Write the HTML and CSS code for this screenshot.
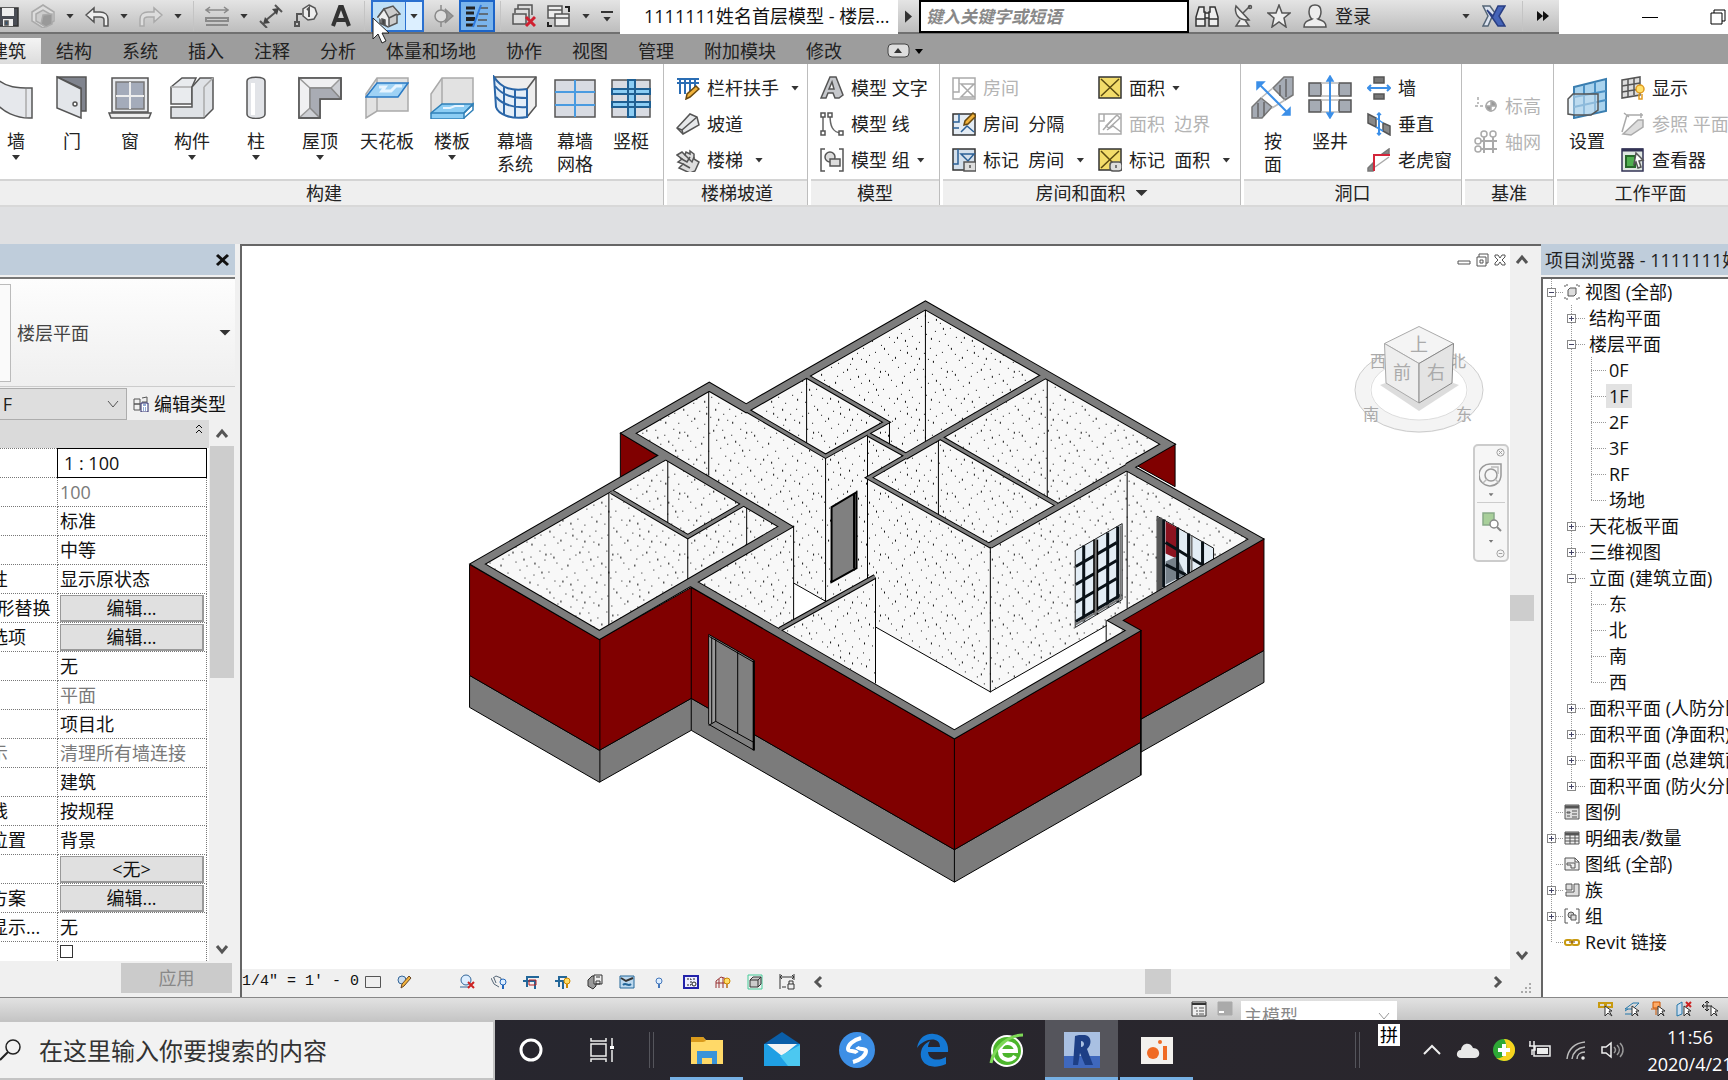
FILE: index.html
```html
<!DOCTYPE html>
<html lang="zh-CN">

<head>
    <meta charset="UTF-8">
    <title>1111111姓名首层模型</title>
    <link rel="stylesheet" href="styles.css">
</head>

<body>
    <header class="titlebar">
        <div class="qat">
            <button class="qat-btn qat-save" aria-label="保存"><svg class="ic" viewBox="0 0 24 24"><path d="M2 4h20v18H2z" fill="#4a4d55" stroke="#333"/><path d="M6 4h12v8H6zM7 15h10v7H7z" fill="#eee" stroke="none"/><path d="M9 17h3v4H9z" fill="#357"/></svg></button>
            <button class="qat-btn" aria-label="同步"><svg class="ic dim" viewBox="0 0 24 24"><path d="M1 8l11-7 11 7v9l-11 7-11-7z" fill="#ddd"/><path d="M5 10l7-4 7 4v7l-7 4-7-4z" fill="#ccc"/><path d="M12 11l9-1v10l-6 3-5-3z" fill="#999"/></svg></button>
            <span class="caret"></span>
            <button class="qat-btn" aria-label="放弃"><svg class="ic" viewBox="0 0 24 24"><path d="M1 11l8-7v4h6c5 0 8 3 8 7v7h-4v-6c0-2-2-3-4-3H9v5z" fill="#eee"/></svg></button>
            <span class="caret"></span>
            <button class="qat-btn" aria-label="重做"><svg class="ic dim" viewBox="0 0 24 24"><path d="M23 11l-8-7v4H9c-5 0-8 3-8 7v7h4v-6c0-2 2-3 4-3h6v5z" fill="#ddd"/></svg></button>
            <span class="caret"></span>
            <i class="sep"></i>
            <button class="qat-btn" aria-label="测量"><svg class="ic mid" viewBox="0 0 24 24"><path d="M1 6h22M5 3L1 6l4 3M19 3l4 3-4 3" stroke-width="1.500"/><path d="M1 14h22v3H1zM1 21h22" stroke-width="2"/></svg></button>
            <span class="caret"></span>
            <button class="qat-btn" aria-label="对齐尺寸标注"><svg class="ic" viewBox="0 0 24 24"><path d="M6 17L18 7M1 17l7 7M16 1l7 7" stroke-width="2"/><path d="M4 20l2-7 5 6zM20 4l-7 1 5 6z" fill="#444" stroke="none"/></svg></button>
            <button class="qat-btn" aria-label="按类别标记"><svg class="ic" viewBox="0 0 24 24"><path d="M15 1l6 3 2 6-3 5-6 1-5-4V5z" fill="#eee"/><path d="M13 6l2-2v9M8 10H3v8M1 18h4v4H1z" stroke-width="2"/></svg></button>
            <button class="qat-btn" aria-label="文字"><svg class="ic" viewBox="0 0 24 24"><path d="M4 22L11 3h2l7 19M7 16h10" stroke="#333" stroke-width="4"/></svg></button>
            <i class="sep"></i>
            <span class="split">
                <button class="split-main" aria-label="默认三维视图"><svg class="ic" viewBox="0 0 24 24"><path d="M1 13l6-8 9-3 7 8-3 1v8l-9 4-8-4v-6z" fill="#ccc"/><path d="M1 13l6-8 5 9v9M12 14l8-4" fill="#eee"/><path d="M5 15l3 1v5l-3-1z" fill="#444"/></svg></button>
                <button class="split-more" aria-label="更多视图"><span class="caret"></span></button>
            </span>
            <button class="qat-btn" aria-label="剖面"><svg class="ic mid" viewBox="0 0 24 24"><circle cx="11" cy="12" r="6" fill="#ddd"/><path d="M15 5l8 7-8 7c3-5 3-9 0-14z" fill="#999"/><path d="M11 1v5M11 18v5"/></svg></button>
            <button class="qat-toggle" aria-label="细线"><svg class="ic" viewBox="0 0 24 24"><path d="M1 4h9M1 9h8M1 21h8" stroke="#222" stroke-width="3"/><path d="M1 15h9" stroke="#222" stroke-width="4"/><path d="M14 4h9M14 10h9M13 16h9M12 22h10"/><path d="M16 1L8 23" stroke="#2f7be0" stroke-width="2"/></svg></button>
            <i class="sep"></i>
            <button class="qat-btn" aria-label="关闭隐藏窗口"><svg class="ic" viewBox="0 0 24 24"><path d="M6 5V1h14v10M3 9V5h14v10M1 10h13v10H1z" fill="#ddd"/><path d="M14 13l9 9M23 13l-9 9" stroke="#d02030" stroke-width="3"/></svg></button>
            <button class="qat-btn" aria-label="切换窗口"><svg class="ic" viewBox="0 0 24 24"><path d="M1 2h14v12H1zM1 6h14" fill="#eee"/><path d="M8 10h14v12H8zM8 14h14" fill="#eee"/><path d="M18 3h4v5M1 18v4h4" stroke="#222" stroke-width="2"/></svg></button>
            <span class="caret"></span>
            <button class="qat-tail" aria-label="自定义"><i></i><span class="caret"></span></button>
        </div>
        <h1 class="doc-title">1111111姓名首层模型 - 楼层...</h1>
        <button class="title-next" aria-label="展开"><svg viewBox="0 0 8 14"><path d="M0 0l8 7-8 7z"/></svg></button>
        <input class="key-search" type="text" placeholder="键入关键字或短语" aria-label="键入关键字或短语">
        <div class="infobar">
            <button aria-label="搜索"><svg class="ic" viewBox="0 0 24 24"><path d="M4 3h5v5h1v14H1V13zM20 3h-5v5h-1v14h9V13zM10 9h4v5h-4zM1 15h9M14 15h9" fill="#eee" stroke="#333"/></svg></button>
            <button aria-label="通讯中心"><svg class="ic" viewBox="0 0 24 24"><path d="M5 2c-2 7 2 15 13 14zM5 2l13 14M12 9l7-7M9 16l-4 6h13l-4-6" fill="#eee"/><circle cx="19" cy="3" r="1.500"/></svg></button>
            <button aria-label="收藏夹"><svg class="ic" viewBox="0 0 24 24"><path d="M12 1l3 8h8l-6 5 2 9-7-5-7 5 2-9-6-5h8z" fill="#eee"/></svg></button>
            <button class="login" aria-label="登录"><svg class="ic" viewBox="0 0 24 24"><path d="M12 1c9 0 6 13 3 14 4 2 8 2 8 8H1c0-6 4-6 8-8C6 14 3 1 12 1z" fill="#eee"/></svg><span>登录</span></button>
            <span class="caret caret-login"></span>
            <button class="exchange" aria-label="Exchange Apps"><svg class="ic" viewBox="0 0 24 24"><path d="M1 2h7l5 7-3 4-4 9H1l5-10z" fill="#dde4f0" stroke="#567"/><path d="M16 2h7l-6 10 6 10h-7L5 6l6 6z" fill="#4564b8" stroke="#2a3f83"/></svg></button>
            <i class="sep"></i>
            <button aria-label="更多"><svg class="ic-s" viewBox="0 0 16 16"><path d="M2 3l6 5-6 5zM8 3l6 5-6 5z" fill="#111" stroke="none"/></svg></button>
        </div>
        <div class="win-controls">
            <button aria-label="最小化"><svg class="ic-s" viewBox="0 0 16 16"><path d="M0 8.500h16" stroke="#000"/></svg></button>
            <button aria-label="还原"><svg class="ic-s" viewBox="0 0 16 16"><path d="M1 4h11v11H1zM4 4V1h11v11h-3" stroke="#000"/></svg></button>
        </div>
    </header>

    <nav class="tabs">
        <button class="tab active">建筑</button>
        <button class="tab">结构</button>
        <button class="tab">系统</button>
        <button class="tab">插入</button>
        <button class="tab">注释</button>
        <button class="tab">分析</button>
        <button class="tab">体量和场地</button>
        <button class="tab">协作</button>
        <button class="tab">视图</button>
        <button class="tab">管理</button>
        <button class="tab">附加模块</button>
        <button class="tab">修改</button>
        <button class="tab-fold" aria-label="最小化功能区"><svg viewBox="0 0 36 16"><rect x="1" y="1" width="21" height="13" rx="4" fill="#ddd" stroke="#444"/><path d="M7 10l4-5 4 5z" fill="#333"/><path d="M28 6h8l-4 5z" fill="#000"/></svg></button>
    </nav>

    <div class="ribbon">
        <section class="panel panel-build">
            <div class="panel-body build-grid">
                <button class="big"><svg class="ic-l" viewBox="0 0 44 44"><path d="M2 3c10 10 22 10 36 10v30C22 44 8 36 2 28z" fill="#e6e8ec"/><path d="M32 14v28" stroke="#aaa"/></svg><span>墙</span><i class="caret"></i></button>
                <button class="big"><svg class="ic-l" viewBox="0 0 44 44"><path d="M7 2h29v34h-5V13z" fill="#80848e"/><path d="M7 2l24 12v29L7 33z" fill="#e3e6ea"/><circle cx="25" cy="29" r="2" fill="#fff"/></svg><span>门</span></button>
                <button class="big"><svg class="ic-l" viewBox="0 0 44 44"><path d="M4 3h36v34H4z" fill="#e9ebee"/><path d="M8 7h28v27H8z" fill="#a4abba" stroke="#777"/><path d="M22 7v27M8 21h28" stroke="#eee" stroke-width="2"/><path d="M1 38h42l-2 5H3z" fill="#eee"/></svg><span>窗</span></button>
                <button class="big"><svg class="ic-l" viewBox="0 0 44 44"><path d="M1 12L12 3h14l-4 9v17H1z" fill="#e9ebee"/><path d="M1 32h21V12l8-9h13v31l-9 9H1z" fill="#dfe2e6"/><path d="M1 12h20M34 12l9-9M34 12v30" stroke="#aaa"/></svg><span>构件</span><i class="caret"></i></button>
                <button class="big"><svg class="ic-l" viewBox="0 0 44 44"><path d="M13 6c0-5 18-5 18 0v33c0 6-18 6-18 0z" fill="#e2e4e8"/><path d="M19 8v32" stroke="#fff" stroke-width="4"/></svg><span>柱</span><i class="caret"></i></button>
                <button class="big"><svg class="ic-l" viewBox="0 0 44 44"><path d="M1 3h42v21H22v19H1z" fill="#cdcfd4"/><path d="M1 3l11 10h21l10-10zM1 43V3l11 10v20z" fill="#f0f0f2" stroke="#999"/><path d="M12 13h21l10 11H22v19L12 33z" fill="#a9acb4" stroke="#888"/><path d="M1 3h42v21H22v19H1z"/></svg><span>屋顶</span><i class="caret"></i></button>
                <button class="big"><svg class="ic-l" viewBox="0 0 44 44"><path d="M1 19L12 3h31v33H12L1 43z" fill="#e2e2e2" stroke="#aaa"/><path d="M12 3v33" stroke="#aaa"/><path d="M1 22L12 8h31L33 22z" fill="#9fd2f5" stroke="#2a7ac4"/><path d="M14 12h6l-3 4h9l5-5h6" stroke="#e6f4ff" stroke-width="3"/></svg><span>天花板</span></button>
                <button class="big"><svg class="ic-l" viewBox="0 0 44 44"><path d="M1 19L12 3h31v28H12L1 38z" fill="#e2e2e2" stroke="#aaa"/><path d="M12 3v27" stroke="#aaa"/><path d="M1 38l11-9h31l-9 9v6H1z" fill="#8ccdf4" stroke="#2f80b8"/><path d="M1 38h33l9-9v6l-9 8" stroke="#2f80b8"/><path d="M13 33h7l5-2h9" stroke="#e6f4ff" stroke-width="2"/></svg><span>楼板</span><i class="caret"></i></button>
                <button class="big"><svg class="ic-l" viewBox="0 0 44 44"><path d="M1 2h42v29L34 42z" fill="#eee"/><path d="M1 2c8 12 18 14 33 12v28C18 45 5 39 3 32z" fill="#e4eef8" stroke="#2a66a8" stroke-width="2"/><path d="M34 14l9-12"/><path d="M11 11v28M22 15v28M2 11c8 10 18 12 32 12M3 22c7 8 18 11 31 10" stroke="#2a66a8" stroke-width="2"/></svg><span>幕墙<br>系统</span></button>
                <button class="big"><svg class="ic-l" viewBox="0 0 44 44"><path d="M2 5h40v37H2z" fill="#d8dbe2"/><path d="M22 5v37M2 17h40M2 30h40" stroke="#4a9be0" stroke-width="2"/></svg><span>幕墙<br>网格</span></button>
                <button class="big"><svg class="ic-l" viewBox="0 0 44 44"><path d="M3 5h38v37H3z" fill="#d8dbe2"/><path d="M3 14h38v5H3zM3 27h38v5H3zM19 5h7v37h-7z" fill="#8ccdf4" stroke="#1f5f92" stroke-width="2"/></svg><span>竖梃</span></button>
            </div>
            <h2 class="panel-title">构建</h2>
        </section>

        <section class="panel panel-stair">
            <div class="panel-body rows">
                <button class="small"><svg class="ic" viewBox="0 0 24 24"><path d="M1 3h22M1 7h22M4 3v15M9 3v15M14 3v12M19 3v8" stroke="#2a6db4" stroke-width="2"/><path d="M10 23l1-5 9-8 3 3-9 8z" fill="#f2b33c" stroke="#6a4a10"/></svg><span>栏杆扶手</span><i class="caret far"></i></button>
                <button class="small"><svg class="ic" viewBox="0 0 24 24"><path d="M1 16L14 2l7 3 2 8L7 22z" fill="#e6e8ea"/><path d="M7 22l-1-4L21 5M1 16l5 2"/></svg><span>坡道</span></button>
                <button class="small"><svg class="ic" viewBox="0 0 24 24"><path d="M1 7l5-3 3 3 1-3 4 2 0-3 4 3v5l5 3-4 9-5 2-11-5 4-4-5-2 4-3z" fill="#ddd"/><path d="M4 10l7 4 3-5M9 7l7 7 2-5M7 16l7 4"/></svg><span>楼梯</span><i class="caret far"></i></button>
            </div>
            <h2 class="panel-title">楼梯坡道</h2>
        </section>

        <section class="panel panel-model">
            <div class="panel-body rows">
                <button class="small"><svg class="ic" viewBox="0 0 24 24"><path d="M1 22L10 1h6l7 18-4 3h-4l-2-5H8l-2 5z" fill="#c6c8cc"/><path d="M9 13l3-7 2 7z" fill="#fff"/></svg><span>模型 文字</span></button>
                <button class="small"><svg class="ic" viewBox="0 0 24 24"><path d="M3 3v19M10 3c0 10 2 18 12 18" stroke="#666"/><path d="M1 1h4v4H1zM8 1h4v4H8zM1 19h4v4H1zM19 19h4v4h-4z" fill="#fff"/></svg><span>模型 线</span></button>
                <button class="small"><svg class="ic" viewBox="0 0 24 24"><path d="M5 1H1v22h4M19 1h4v22h-4"/><circle cx="10" cy="9" r="5" fill="#ddd"/><path d="M10 11h10v7H10z" fill="#ddd"/></svg><span>模型 组</span><i class="caret"></i></button>
            </div>
            <h2 class="panel-title">模型</h2>
        </section>

        <section class="panel panel-room">
            <div class="panel-body pair">
                <div class="rows">
                    <button class="small" disabled><svg class="ic dim" viewBox="0 0 24 24"><path d="M1 2h22v21H1zM7 2v14H1M9 8h13L9 21h13z"/></svg><span>房间</span></button>
                    <button class="small"><svg class="ic" viewBox="0 0 24 24"><path d="M1 2h22v21H1z" fill="#e4ecf4" stroke="#333"/><path d="M7 2v8H1M9 20l6-6 7 6M1 16h6" stroke="#2a5f95"/><path d="M12 13l1-4 8-8 3 3-8 8z" fill="#f2b33c" stroke="#6a4a10"/></svg><span>房间&nbsp; 分隔</span></button>
                    <button class="small"><svg class="ic" viewBox="0 0 24 24"><path d="M1 1h22v21H1z" fill="#d4e0ec" stroke="#333"/><path d="M6 1v15H1M9 6h13l-6 7z" stroke="#2a5f95"/><path d="M12 14h12v9H12z" fill="#ddd"/><path d="M18 17v3"/></svg><span>标记&nbsp; 房间</span><i class="caret far"></i></button>
                </div>
                <div class="rows">
                    <button class="small"><svg class="ic" viewBox="0 0 24 24"><path d="M1 1h22v21H1z" fill="#f3dc6a" stroke="#333"/><path d="M3 3l18 17M21 3L3 20" stroke="#5a4a10"/></svg><span>面积</span><i class="caret"></i></button>
                    <button class="small" disabled><svg class="ic dim" viewBox="0 0 24 24"><path d="M1 2h22v20H1zM6 2v7H1M5 18l9-10M9 18l6-4 8 6"/><path d="M8 14L19 3l3 3-11 10z"/></svg><span>面积&nbsp; 边界</span></button>
                    <button class="small"><svg class="ic" viewBox="0 0 24 24"><path d="M1 1h22v21H1z" fill="#f3dc6a" stroke="#333"/><path d="M3 3l12 12M21 3L3 20" stroke="#5a4a10"/><rect x="12" y="14" width="12" height="9" rx="3" fill="#ddd"/><path d="M18 17v3"/></svg><span>标记&nbsp; 面积</span><i class="caret far"></i></button>
                </div>
            </div>
            <h2 class="panel-title">房间和面积<i class="caret caret-big"></i></h2>
        </section>

        <section class="panel panel-hole">
            <div class="panel-body hole-grid">
                <button class="big"><svg class="ic-l" viewBox="0 0 44 44"><path d="M22 13L33 2h9v18l-8 5zM1 43V32l9-9 11 9-10 11z" fill="#a5abb4" stroke="#777"/><path d="M29 10v11M35 4v18M7 28v14M13 27v14" stroke="#666"/><path d="M22 13L10 23M34 25L21 33" stroke="#bbb"/><path d="M8 9l29 29" stroke="#3b8fe8" stroke-width="2"/><path d="M6 7h7l-7 7zM39 40h-7l7-7z" fill="#3b8fe8" stroke="#3b8fe8"/></svg><span>按<br>面</span></button>
                <button class="big"><svg class="ic-l" viewBox="0 0 44 44"><path d="M1 8h12v13H1zM31 8h12v13H31zM1 25h12v12H1zM31 25h12v12H31z" fill="#a5abb4"/><path d="M13 8h18M13 21h18M13 25h18M13 37h18" stroke="#bbb"/><path d="M22 4v36" stroke="#3b8fe8" stroke-width="2"/><path d="M22 1l3 5h-6zM22 43l-3-5h6z" fill="#3b8fe8" stroke="#3b8fe8"/></svg><span>竖井</span></button>
                <div class="rows">
                    <button class="small"><svg class="ic" viewBox="0 0 24 24"><path d="M7 1h10v6H7zM7 18h10v5H7z" fill="#777"/><path d="M1 12h22M4 9l-3 3 3 3M20 9l3 3-3 3" stroke="#3b8fe8" stroke-width="2"/></svg><span>墙</span></button>
                    <button class="small"><svg class="ic" viewBox="0 0 24 24"><path d="M1 2l8 4v9l-8-4zM16 11l7 3v9l-7-4z" fill="#888"/><path d="M12 1v22" stroke="#3b8fe8" stroke-width="2"/><path d="M9 6l7 5M9 15l7 4M10 3l2-2 2 2M10 21l2 2 2-2" stroke="#3b8fe8"/></svg><span>垂直</span></button>
                    <button class="small"><svg class="ic" viewBox="0 0 24 24"><path d="M1 20l5-5v8H1zM15 6l7-5v5z" fill="#888" stroke="#777"/><path d="M8 19L22 9" stroke="#aaa"/><path d="M7 23V7h16" stroke="#d3263a" stroke-width="2"/></svg><span>老虎窗</span></button>
                </div>
            </div>
            <h2 class="panel-title">洞口</h2>
        </section>

        <section class="panel panel-datum">
            <div class="panel-body rows datum">
                <button class="small" disabled><svg class="ic dim" viewBox="0 0 24 24"><path d="M4 3v7M1 12h10" stroke-dasharray="3 2"/><circle cx="17" cy="12" r="5"/><path d="M17 7a5 5 0 0 1 5 5h-5zM17 17a5 5 0 0 1-5-5h5z" fill="#999"/></svg><span>标高</span></button>
                <button class="small" disabled><svg class="ic dim" viewBox="0 0 24 24"><circle cx="10" cy="4" r="3"/><circle cx="19" cy="4" r="3"/><circle cx="4" cy="11" r="3"/><circle cx="4" cy="19" r="3"/><path d="M10 7v16M19 7v16M7 11h16M7 19h16" stroke-width="2"/></svg><span>轴网</span></button>
            </div>
            <h2 class="panel-title">基准</h2>
        </section>

        <section class="panel panel-plane">
            <div class="panel-body plane-grid">
                <button class="big"><svg class="ic-l" viewBox="0 0 44 44"><path d="M9 12l32-8v32L9 43z" fill="#a9d3ee" stroke="#3a7eb0" stroke-width="2"/><path d="M19 10v31M30 7v31M9 22l32-6M9 32l32-7" stroke="#4a90c4" stroke-width="2"/><path d="M3 24l5-5h25v16l-7 5H9l-6-1z" fill="#cfe4f2" fill-opacity=".5"/></svg><span>设置</span></button>
                <div class="rows">
                    <button class="small"><svg class="ic" viewBox="0 0 24 24"><path d="M1 4l18-3v18L1 22z" fill="#ddd"/><path d="M7 3v18M13 2v17M1 10l18-3M1 16l18-3"/><circle cx="19" cy="13" r="4" fill="#ffe06a" stroke="#e09a20"/><path d="M18 18v5h3v-5" stroke="#e09a20"/></svg><span>显示</span></button>
                    <button class="small" disabled><svg class="ic dim" viewBox="0 0 24 24"><path d="M6 3h16M6 3L1 20M3 1l5 4M20 1v5M2 22L17 8h5v7L10 23z" fill="#ddd"/></svg><span>参照 平面</span></button>
                    <button class="small"><svg class="ic" viewBox="0 0 24 24"><path d="M1 1h21v22H1z" fill="#dfe8e2" stroke="#335"/><path d="M1 2h21" stroke="#335" stroke-width="3"/><path d="M5 8h9v11H5z" fill="#4faf4f" stroke="#27682a" stroke-width="2"/><path d="M15 5l7 7-4 1 2 6-3 1-2-6-2 2z" fill="#fff"/></svg><span>查看器</span></button>
                </div>
            </div>
            <h2 class="panel-title">工作平面</h2>
        </section>
    </div>

    <div class="options-bar"></div>

    <main class="workspace">
        <aside class="props">
            <div class="dock-head props-head"><button aria-label="关闭属性"><svg class="ic-s" viewBox="0 0 16 16"><path d="M2 3l11 10M13 3L2 13" stroke="#111" stroke-width="3"/></svg></button></div>
            <div class="type-picker"><i class="type-thumb"></i><span>楼层平面</span><i class="caret caret-big"></i></div>
            <div class="instance">
                <label class="combo"><select aria-label="实例"><option>楼层平面: 1F</option></select><svg class="ic-s" viewBox="0 0 16 16"><path d="M3 5l5 6 5-6" stroke="#555"/></svg></label>
                <button class="edit-type"><svg class="ic-s" viewBox="0 0 16 16"><path d="M1 3h6v5H1zM9 2l5-1v5H9M1 8h6v6H1z"/><path d="M8 7h7v9H8z" fill="#fff" stroke="#226"/><path d="M10 9h3M10 12h1M12 12h1M10 14h1M12 14h1" stroke="#25a"/></svg><span>编辑类型</span></button>
            </div>
            <div class="prop-area">
                <div class="prop-scroll">
                    <div class="prop-group"><svg viewBox="0 0 8 10"><path d="M1 4l3-3 3 3M1 9l3-3 3 3"/></svg></div>
                    <table class="prop-table">
                        <tr><th>视图比例</th><td class="focus"><input type="text" value="1 : 100" aria-label="视图比例"></td></tr>
                        <tr class="off"><th>比例值</th><td>100</td></tr>
                        <tr><th>显示模型</th><td>标准</td></tr>
                        <tr><th>详细程度</th><td>中等</td></tr>
                        <tr><th>零件可见性</th><td>显示原状态</td></tr>
                        <tr><th>可见性/图形替换</th><td><button>编辑...</button></td></tr>
                        <tr><th>图形显示选项</th><td><button>编辑...</button></td></tr>
                        <tr><th>基线</th><td>无</td></tr>
                        <tr class="off"><th>基线方向</th><td>平面</td></tr>
                        <tr><th>方向</th><td>项目北</td></tr>
                        <tr class="off"><th>墙连接显示</th><td>清理所有墙连接</td></tr>
                        <tr><th>规程</th><td>建筑</td></tr>
                        <tr><th>显示隐藏线</th><td>按规程</td></tr>
                        <tr><th>颜色方案位置</th><td>背景</td></tr>
                        <tr><th>颜色方案</th><td><button>&lt;无&gt;</button></td></tr>
                        <tr><th>系统颜色方案</th><td><button>编辑...</button></td></tr>
                        <tr><th>默认分析显示...</th><td>无</td></tr>
                        <tr><th><label for="sunPath">日光路径</label></th><td class="check"><input type="checkbox" id="sunPath"></td></tr>
                    </table>
                </div>
                <div class="vscroll">
                    <svg class="ic-s" viewBox="0 0 16 16"><path d="M3 11l5-6 5 6" stroke-width="3"/></svg>
                    <i class="props-thumb"></i>
                    <svg class="ic-s" viewBox="0 0 16 16"><path d="M3 5l5 6 5-6" stroke-width="3"/></svg>
                </div>
            </div>
            <div class="props-foot"><button disabled>应用</button></div>
        </aside>

        <section class="view">
            <div class="view-main">
                <div class="stage">
                    <svg class="model" viewBox="242 246 1268 724" preserveAspectRatio="xMidYMid meet">
                        <defs>
                            <pattern id="sand" width="67" height="61" patternUnits="userSpaceOnUse">
                                <rect width="67" height="61" fill="#f8f8f8"/>
                                <path d="M3 2.500h1M14 5.500h1M27 1.500h1M39 6.500h1M52 3.500h1M61 8.500h1M8 11.500h1M20 14.500h1M33 10.500h1M46 13.500h1M57 17.500h1M2 18.500h1M12 23.500h1M25 20.500h1M38 24.500h1M50 21.500h1M64 26.500h1M7 29.500h1M18 32.500h1M30 28.500h1M41 31.500h1M55 29.500h1M1 36.500h1M10 40.500h1M23 37.500h1M36 41.500h1M48 37.500h1M59 43.500h1M4 47.500h1M17 49.500h1M29 45.500h1M40 51.500h1M53 48.500h1M65 50.500h1M8 57.500h1M21 55.500h1M34 58.500h1M46 59.500h1M57 54.500h1" stroke="#111"/>
                                <path d="M17 9h1M43 4h1M31 17h1M5 24h1M60 34h1M26 33h1M45 44h1M13 44h1M36 48h1M62 57h1M54 11h1M24 53h1M65 15h1M48 54h1M9 6h1M34 36h1" stroke="#111" stroke-width="2"/>
                            </pattern>
                        </defs>
                        <!-- outer walls -->
                        <g stroke="#000" stroke-width="1">
                            <path d="M620 433v45l37-22zM1175.500 444v43l-38-21z" fill="#800000"/>
                            <path d="M1141 720l123.500-69v32L1141 753z" fill="#7b7b7b"/>
                            <path d="M1118 621l146.500-82v112L1141 720z" fill="#800000"/>
                            <path d="M469 676l130 75 92-52 263.500 151.500L1141 743v33L954.500 883 691 731l-92 52-130-75z" fill="#7b7b7b"/>
                            <path d="M469 565l130 75 92-52 263.500 151.500L1141 631v112L954.500 850.500 691 699l-92 52-130-75z" fill="#800000"/>
                            <path d="M599.500 640v143M691 588v143M954.500 739v144"/>
                        </g>
                        <!-- rooms -->
                        <path d="M477 565L665 456l-37-22 81-47 37 22 179-104 243 139-40 23 129 72-141 82 18 10-180 104-263-152-92 53z" fill="url(#sand)"/>
                        <path d="M793.500 583.500L826 601.500l-32 19zM875.500 627.500l115 65L1107 626v16l-152.500 89-79-46z" fill="#fff"/>
                        <path d="M793.500 583.500L826 602M875.500 627.500l115 65L1107 626" fill="none" stroke="#000"/>
                        <path d="M708.500 391v85M925.500 310v133M806.500 379v65M889.500 423v21M825.500 458v144M867.500 435v144M938.500 440v75M1047.500 380v119M990.500 548v145M1127.500 470v139M1106.500 621v21M875.500 578v106M667.500 460v63M608.500 493v133M687.500 538v42M746.500 505v41M793.500 526v94" stroke="#000"/>
                        <!-- inner opening -->
                        <path d="M831.500 507.500l25-15v76l-25 14z" fill="#808080" stroke="#000" stroke-width="2"/>
                        <path d="M854 494v75" stroke="#000" stroke-width="2"/>
                        <!-- windows -->
                        <path d="M1075.500 551l47-27v76l-47 28z" fill="#e3edf5" stroke="#222"/>
                        <path d="M1084 546v76M1108 533v75M1118 527v76" stroke="#0a1218" stroke-width="3"/>
                        <path d="M1076 567l41-24M1076 585l41-24M1076 603l41-24M1076 622l46-27" stroke="#0a1218" stroke-width="3"/>
                        <path d="M1096 540v75" stroke="#000" stroke-width="5"/>
                        <path d="M1096 540v75M1121 526v74M1076 625l46-27" stroke="#777" stroke-width="2"/>
                        <path d="M1157.500 516.500l56.500 32v11l-56.500 33z" fill="#e3edf5" stroke="#111"/>
                        <path d="M1166 522l11 6v31l-11-5z" fill="#8c1320"/>
                        <path d="M1166 562l11-5 9 18-20 10z" fill="#76818a"/>
                        <path d="M1160 518v73" stroke="#555" stroke-width="5"/>
                        <path d="M1164 520v68M1178 528v52M1189 534v40M1203 542v24M1166 543l36 22M1166 565l20 10" stroke="#0a1218" stroke-width="3"/>
                        <path d="M1192 536v36" stroke="#777" stroke-width="2"/>
                        <!-- wall tops: black silhouette first, grey on top -->
                        <g fill="none" stroke="#000">
                            <path class="w-thick" d="M665 456L477 564.500 599 635.500 785.500 527 628 433.500 709 387l37 21.500L925.500 305.500 1168 444.500 1128 467.500M691 583L954.500 735 1133.500 631l-18-10L1256.500 539.500 1128 467.500"/>
                            <path class="w-mid" d="M990 546L1168 444.500M905 457L1045 376"/>
                            <path class="w-thin" d="M746 410L825.500 456.500 886.500 422.500 806 376M868 434.500L907 456M938 438L869 478 990 546 1032 522M941 438L1057 505M611 492L687.500 537 745 503.500M779.500 630L875 577"/>
                        </g>
                        <g fill="none" stroke="#7d7d7d">
                            <path class="w-thick-in" d="M665 456L477 564.500 599 635.500 785.500 527 628 433.500 709 387l37 21.500L925.500 305.500 1168 444.500 1128 467.500M691 583L954.500 735 1133.500 631l-18-10L1256.500 539.500 1128 467.500"/>
                            <path class="w-mid-in" d="M990 546L1168 444.500M905 457L1045 376"/>
                            <path class="w-thin-in" d="M746 410L825.500 456.500 886.500 422.500 806 376M868 434.500L907 456M938 438L869 478 990 546 1032 522M941 438L1057 505M611 492L687.500 537 745 503.500M779.500 630L875 577"/>
                        </g>
                        <path d="M1141.500 631v145" stroke="#000"/>
                        <!-- front door -->
                        <path d="M708.500 635l45.500 26v90l-45.500-26z" fill="#808080" stroke="#000"/>
                        <path d="M709 636l6 4v82l-6 3z" fill="#999"/>
                        <path d="M711.500 638v86M715.500 640v82l38 21M737.500 652v82M715.500 722l-7 4M709 637l45 26" fill="none" stroke="#000"/>
                        <path d="M753.500 661v90" stroke="#000" stroke-width="2"/>
                    </svg>

                    <div class="mdi">
                        <button aria-label="最小化视图"><svg class="ic-s" viewBox="0 0 16 16"><path d="M2 9h12v3H2z"/></svg></button>
                        <button aria-label="还原视图"><svg class="ic-s" viewBox="0 0 16 16"><path d="M3 5h9v9H3zM5 5V2h9v9h-2M6 8h3v3H6z"/></svg></button>
                        <button aria-label="关闭视图"><svg class="ic-s" viewBox="0 0 16 16"><path d="M3 3h3l2 3 2-3h3v2l-3 3 3 3v2h-3l-2-3-2 3H3v-2l3-3-3-3z"/></svg></button>
                    </div>

                    <svg class="viewcube" viewBox="1350 322 138 116">
                        <ellipse cx="1419" cy="391" rx="56" ry="36" fill="none" stroke="#f4f4f4" stroke-width="14"/>
                        <ellipse cx="1419" cy="391" rx="64" ry="42" fill="none" stroke="#ccc"/>
                        <ellipse cx="1419" cy="391" rx="48" ry="30" fill="#fff" stroke="#ddd"/>
                        <g class="compass">
                            <text x="1370" y="368">西</text>
                            <text x="1450" y="368">北</text>
                            <text x="1363" y="421">南</text>
                            <text x="1456" y="421">东</text>
                        </g>
                        <path d="M1380 386l39-14 40 14-40 26z" fill="#bbb" opacity=".5"/>
                        <path d="M1419 327.500l34.500 17-34.500 20-34.500-20z" fill="#f4f4f4" stroke="#aaa"/>
                        <path d="M1384.500 344.500l34.500 20V404l-33-20z" fill="#eee" stroke="#aaa"/>
                        <path d="M1453.500 344.500l-34.500 20V404l33-20z" fill="#e4e4e4" stroke="#888"/>
                        <g class="faces">
                            <text x="1410" y="352">上</text>
                            <text x="1393" y="380">前</text>
                            <text x="1427" y="380">右</text>
                        </g>
                    </svg>

                    <div class="navbar">
                        <svg class="nav-dot" viewBox="0 0 10 10"><circle cx="5" cy="5" r="4"/><path d="M3 3l4 4M7 3L3 7"/></svg>
                        <button aria-label="控制盘"><svg class="ic" viewBox="0 0 24 24"><path d="M12 1h10v11a11 11 0 1 1-10-11z" stroke="#999"/><circle cx="12" cy="12" r="6" stroke="#999"/><path d="M4 20l4-4M20 20l-4-4M12 4h7v7" stroke="#bbb"/></svg></button>
                        <i class="caret"></i>
                        <hr>
                        <button aria-label="缩放"><svg class="ic" viewBox="0 0 24 24"><path d="M4 3h11v12H4z" fill="#a8cf9a" stroke="#8a8"/><circle cx="15" cy="14" r="4" fill="#fff" stroke="#888"/><path d="M18 17l4 4" stroke="#888" stroke-width="2"/></svg></button>
                        <i class="caret"></i>
                        <svg class="nav-dot" viewBox="0 0 10 10"><circle cx="5" cy="5" r="4"/><path d="M3 5h4"/></svg>
                    </div>
                </div>
                <div class="vscroll view-vscroll">
                    <svg class="ic-s" viewBox="0 0 16 16"><path d="M3 11l5-6 5 6" stroke-width="3"/></svg>
                    <i class="view-thumb"></i>
                    <svg class="ic-s" viewBox="0 0 16 16"><path d="M3 5l5 6 5-6" stroke-width="3"/></svg>
                </div>
            </div>
            <div class="view-bar">
                <button class="scale">1/4″ = 1' - 0</button>
                <div class="view-tools">
                    <button aria-label="详细程度"><svg class="ic-s" viewBox="0 0 16 16"><path d="M.5 2.500h15v11H.5z" fill="#eee"/></svg></button>
                    <button aria-label="视觉样式"><svg class="ic-s" viewBox="0 0 16 16"><circle cx="6" cy="6" r="4" fill="#cde" stroke="#369"/><path d="M5 14l1-4 7-8 2 2-7 8z" fill="#f2b33c" stroke="#642"/></svg></button>
                </div>
                <div class="view-tools tools-wide">
                    <button aria-label="日光路径"><svg class="ic-s" viewBox="0 0 16 16"><circle cx="7" cy="6" r="5" fill="#def" stroke="#369"/><path d="M1 13h9" stroke="#369"/><path d="M9 8l6 6M15 8l-6 6" stroke="#c22" stroke-width="2"/></svg></button>
                    <button aria-label="阴影"><svg class="ic-s" viewBox="0 0 16 16"><path d="M0 4l3 6 5 3M2 4l3-2 5 2v3M3 4l2 5" stroke="#567"/><circle cx="12" cy="8" r="3" fill="#def" stroke="#26b"/><path d="M12 11v4" stroke="#26b" stroke-width="2"/></svg></button>
                    <button aria-label="裁剪视图"><svg class="ic-s" viewBox="0 0 16 16"><path d="M4 13V3h12M0 7h12v8" stroke="#269" stroke-width="2"/><path d="M6 6h7v5H6z" stroke="#b22"/></svg></button>
                    <button aria-label="显示裁剪区域"><svg class="ic-s" viewBox="0 0 16 16"><path d="M4 13V3h8M0 7h8v8" stroke="#269" stroke-width="2"/><circle cx="12" cy="7" r="3" fill="#fd6" stroke="#c80"/><path d="M12 10v4" stroke="#c80" stroke-width="2"/></svg></button>
                    <button aria-label="锁定三维视图"><svg class="ic-s" viewBox="0 0 16 16"><path d="M1 6l4-4h4v10l-3 3-5-3z" fill="#999" stroke="#333"/><path d="M7 1h8v9H7z" fill="#eee" stroke="#333"/><path d="M9 3h4M9 7h4v3H9z" stroke="#333"/></svg></button>
                    <button aria-label="隔离"><svg class="ic-s" viewBox="0 0 16 16"><path d="M1 2h14v12H1z" fill="#bcd8ee" stroke="#269"/><path d="M2 4l5 3 7-3" stroke="#333" stroke-width="2"/><path d="M4 11c3-3 5 2 8-1" stroke="#269" stroke-width="2"/></svg></button>
                    <button aria-label="显示隐藏图元"><svg class="ic-s" viewBox="0 0 16 16"><circle cx="8" cy="7" r="3" fill="#def" stroke="#47b"/><path d="M8 10v4" stroke="#47b" stroke-width="2"/></svg></button>
                    <button aria-label="临时视图属性"><svg class="ic-s" viewBox="0 0 16 16"><path d="M1 2h14v12H1z" fill="#eef" stroke="#22a" stroke-width="2"/><path d="M4 5h4v6H4M10 5h3" stroke="#222" stroke-dasharray="2 1"/><circle cx="11" cy="10" r="2" fill="#fff" stroke="#222"/></svg></button>
                    <button aria-label="分析模型"><svg class="ic-s" viewBox="0 0 16 16"><path d="M1 14V7l5-4 6 2v9M4 5v9M8 4v10M1 9h11" stroke="#933"/><circle cx="12" cy="7" r="3" fill="#fd6" stroke="#c80"/><path d="M12 10v4" stroke="#c80"/></svg></button>
                    <button aria-label="高亮位移集"><svg class="ic-s" viewBox="0 0 16 16"><path d="M1 1h14v14H1z" stroke="#4c9"/><path d="M3 6l3-3h8v7l-3 3H3zM3 6h8v7M11 6l3-3" fill="#ccc" stroke="#333"/></svg></button>
                    <button aria-label="显示约束"><svg class="ic-s" viewBox="0 0 16 16"><path d="M1 0v15M15 0v6M1 3h14M3 1L1 3l2 2M13 1l2 2-2 2M3 13h4" stroke="#333"/><path d="M9 10h6v5H9zM10 10V7h4v3" stroke="#333"/></svg></button>
                    <button aria-label="向左"><svg class="ic-s" viewBox="0 0 16 16"><path d="M10 3L5 8l5 5" stroke-width="3"/></svg></button>
                </div>
                <div class="hscroll"><i class="h-thumb"></i></div>
                <button class="h-next" aria-label="向右"><svg class="ic-s" viewBox="0 0 16 16"><path d="M6 3l5 5-5 5" stroke-width="3"/></svg></button>
                <svg class="grip ic-s" viewBox="0 0 16 16"><path d="M4 14h2M8 14h2M12 14h2M8 10h2M12 10h2M12 6h2" stroke="#aaa" stroke-width="2"/></svg>
            </div>
        </section>

        <aside class="browser">
            <div class="dock-head browser-head">项目浏览器 - 1111111姓名首层模型</div>
            <ul class="tree">
                <li><div class="node"><b class="box minus"></b><i class="dots"></i><svg class="ic-s" viewBox="0 0 16 16"><path d="M4 1H1v3M12 1h3v3M4 15H1v-3M12 15h3v-3" stroke-dasharray="2 1"/><path d="M4 6l2-2h6v6l-2 2H4z" fill="#ddd"/></svg><span>视图 (全部)</span></div>
                    <ul>
                        <li><div class="node"><b class="box"></b><i class="dots"></i><span>结构平面</span></div></li>
                        <li><div class="node"><b class="box minus"></b><i class="dots"></i><span>楼层平面</span></div>
                            <ul>
                                <li><div class="node"><i class="dots"></i><span>0F</span></div></li>
                                <li><div class="node selected"><i class="dots"></i><span>1F</span></div></li>
                                <li><div class="node"><i class="dots"></i><span>2F</span></div></li>
                                <li><div class="node"><i class="dots"></i><span>3F</span></div></li>
                                <li><div class="node"><i class="dots"></i><span>RF</span></div></li>
                                <li><div class="node"><i class="dots"></i><span>场地</span></div></li>
                            </ul>
                        </li>
                        <li><div class="node"><b class="box"></b><i class="dots"></i><span>天花板平面</span></div></li>
                        <li><div class="node"><b class="box"></b><i class="dots"></i><span>三维视图</span></div></li>
                        <li><div class="node"><b class="box minus"></b><i class="dots"></i><span>立面 (建筑立面)</span></div>
                            <ul>
                                <li><div class="node"><i class="dots"></i><span>东</span></div></li>
                                <li><div class="node"><i class="dots"></i><span>北</span></div></li>
                                <li><div class="node"><i class="dots"></i><span>南</span></div></li>
                                <li><div class="node"><i class="dots"></i><span>西</span></div></li>
                            </ul>
                        </li>
                        <li><div class="node"><b class="box"></b><i class="dots"></i><span>面积平面 (人防分区面积)</span></div></li>
                        <li><div class="node"><b class="box"></b><i class="dots"></i><span>面积平面 (净面积)</span></div></li>
                        <li><div class="node"><b class="box"></b><i class="dots"></i><span>面积平面 (总建筑面积)</span></div></li>
                        <li><div class="node"><b class="box"></b><i class="dots"></i><span>面积平面 (防火分区面积)</span></div></li>
                    </ul>
                </li>
                <li><div class="node"><b class="nobox"></b><i class="dots"></i><svg class="ic-s" viewBox="0 0 16 16"><path d="M1 1h14v14H1z" fill="#ddd"/><path d="M1 3h14" stroke-width="3"/><path d="M3 8h3v1H3zM3 12h3M8 7h5M8 10h5M8 13h5"/></svg><span>图例</span></div></li>
                <li><div class="node"><b class="box"></b><i class="dots"></i><svg class="ic-s" viewBox="0 0 16 16"><path d="M1 2h14v12H1zM1 8h14M1 11h14M6 5v9M11 5v9" fill="#eee"/><path d="M1 4h14" stroke-width="3"/></svg><span>明细表/数量</span></div></li>
                <li><div class="node"><b class="nobox"></b><i class="dots"></i><svg class="ic-s" viewBox="0 0 16 16"><path d="M1 2h10l4 4v8H1zM11 2v4h4" fill="#eee"/><path d="M3 7h8v5H7v-3H3z"/></svg><span>图纸 (全部)</span></div></li>
                <li><div class="node"><b class="box"></b><i class="dots"></i><svg class="ic-s" viewBox="0 0 16 16"><path d="M2 2h6v6H2zM10 2h5v12H2v-4h8z" fill="#ddd"/></svg><span>族</span></div></li>
                <li><div class="node"><b class="box"></b><i class="dots"></i><svg class="ic-s" viewBox="0 0 16 16"><path d="M4 1H1v14h3M12 1h3v14h-3"/><circle cx="7" cy="7" r="3" fill="#ccc"/><path d="M7 7h5v5H7z" fill="#ddd"/></svg><span>组</span></div></li>
                <li><div class="node"><b class="nobox"></b><i class="dots"></i><svg class="ic-s" viewBox="0 0 16 16"><rect x="1" y="6" width="7" height="5" rx="2" stroke="#c89a10" stroke-width="2"/><rect x="8" y="6" width="7" height="5" rx="2" stroke="#c89a10" stroke-width="2"/><path d="M5 8h6" stroke="#741"/></svg><span>Revit 链接</span></div></li>
            </ul>
        </aside>
    </main>

    <div class="status">
        <div class="worksets">
            <svg class="ic-s" viewBox="0 0 16 16"><path d="M1 1h14v14H1z" fill="#eee" stroke="#333"/><path d="M1 3h14" stroke="#333" stroke-width="2"/><path d="M3 7h3M8 7h5M5 10h2M8 10h5M5 13h2M8 13h5"/></svg>
            <svg class="ic-s" viewBox="0 0 16 16"><path d="M1 1h14v13H1z" fill="#aaa" stroke="#aaa"/><path d="M2 11h5" stroke="#fff" stroke-width="2"/></svg>
            <label class="combo model-combo"><select aria-label="设计选项" disabled><option>主模型</option></select><svg class="ic-s" viewBox="0 0 16 16"><path d="M3 5l5 6 5-6" stroke="#999"/></svg></label>
        </div>
        <div class="pickers">
            <svg class="ic-s" viewBox="0 0 16 16"><path d="M1 2h6v4H1zM8 2h6v4H8z" stroke="#c89a10" stroke-width="2"/><path d="M7 5v10l3-3 4 3-3-5h3z" fill="#fff" stroke="#333"/></svg>
            <svg class="ic-s" viewBox="0 0 16 16"><path d="M1 8l8-6h6l-6 6zM1 13h7M1 10l3-2" stroke="#27a"/><path d="M8 5v10l3-3 3 3-2-5h3z" fill="#fff" stroke="#333"/></svg>
            <svg class="ic-s" viewBox="0 0 16 16"><path d="M3 1h7v6H3zM1 8h11M6 8v6" fill="#fa6" stroke="#c50"/><path d="M8 5v10l3-3 3 3-2-5h3z" fill="#fff" stroke="#333"/></svg>
            <svg class="ic-s" viewBox="0 0 16 16"><path d="M1 4l5-3v12l-5 2z" fill="#cde" stroke="#27a"/><path d="M10 1l5 5M15 1l-5 5" stroke="#c22" stroke-width="2"/><path d="M8 5v10l3-3 3 3-2-5h3z" fill="#fff" stroke="#333"/></svg>
            <svg class="ic-s" viewBox="0 0 16 16"><path d="M5 0v10M0 5h10M3 2l2-2 2 2M3 8l2 2 2-2M2 3L0 5l2 2" stroke="#222"/><path d="M9 5v10l3-3 3 3-2-5h3z" fill="#fff" stroke="#333"/></svg>
            <svg class="ic-s" viewBox="0 0 16 16"><path d="M1 3h13L9 9v5H7V9z" fill="#ddd"/></svg>
        </div>
    </div>

    <footer class="taskbar">
        <label class="task-search"><svg class="ic" viewBox="0 0 24 24"><circle cx="15" cy="9" r="7" stroke="#222"/><path d="M10 14L2 22" stroke="#222" stroke-width="2"/></svg><input type="text" placeholder="在这里输入你要搜索的内容" aria-label="在这里输入你要搜索的内容"></label>
        <button class="task-btn" aria-label="Cortana"><svg class="ic-t" viewBox="0 0 36 36"><circle cx="18" cy="18" r="10" stroke="#fff" stroke-width="3"/></svg></button>
        <button class="task-btn" aria-label="任务视图"><svg class="ic-t" viewBox="0 0 36 36"><path d="M6 12h15v12H6zM6 6v3h15V6M6 30v-3h15v3M27 6v8M27 18v12" stroke="#eee" stroke-width="1.500"/><path d="M25 14h4v3h-4z" fill="#fff"/></svg></button>
        <i class="task-sep"></i>
        <div class="apps">
            <button class="app open" aria-label="文件资源管理器"><svg class="ic-t" viewBox="0 0 36 36"><path d="M2 5h12l3 3h17v24H2z" fill="#ffd968"/><path d="M2 5h12l3 4-3 1H2z" fill="#d99a1c"/><path d="M8 32V19h20v13h-5v-6H13v6z" fill="#3a93d8"/></svg></button>
            <button class="app" aria-label="邮件"><svg class="ic-t" viewBox="0 0 36 36"><path d="M0 12L18 0l18 12v4H0z" fill="#0a5ea8"/><path d="M0 12h36v22H0z" fill="#1f9fe4"/><path d="M3 12h30L18 24z" fill="#f4f4f4"/><path d="M36 13v21H24L16 24z" fill="#4cc8f0"/></svg></button>
            <button class="app" aria-label="浏览器助手"><svg class="ic-t" viewBox="0 0 36 36"><circle cx="18" cy="18" r="18" fill="#3d8fe6"/><path d="M22 6c-8 2-13 7-13 11 0 3 7 1 9 4M14 30c8-2 13-7 13-11 0-3-7-1-9-4" stroke="#fff" stroke-width="4"/></svg></button>
            <button class="app" aria-label="Edge"><svg class="ic-t" viewBox="0 0 36 36"><path d="M3 16C5 4 14 1 20 2c10 1 15 9 14 18H14c1 9 11 9 18 5v7C16 39 5 31 7 20c1-6 5-9 9-11-1 2-2 4-2 6h12C26 4 10 6 3 16z" fill="#1478d4"/></svg></button>
            <button class="app" aria-label="360浏览器"><svg class="ic-t" viewBox="0 0 36 36"><circle cx="18" cy="19" r="16" fill="#fff"/><circle cx="18" cy="19" r="14" fill="#4cb52c"/><path d="M26 24c-3 6-15 5-15-5 0-11 16-10 16 0H12" stroke="#fff" stroke-width="4"/><path d="M2 31C5 15 20 3 34 3" stroke="#7ed957" stroke-width="3"/></svg></button>
            <button class="app open current" aria-label="Revit"><svg class="ic-t" viewBox="0 0 36 36"><path d="M0 0h36v36H0z" fill="#a9c0e2"/><path d="M0 24h36v12H0z" fill="#3f68bd"/><path d="M11 4l4-1h6c7 1 7 10 2 14l6 16h-8l-5-12-2 12H9z" fill="#1d3f86"/><path d="M17 9v6c4 0 4-6 0-6z" fill="#a9c0e2"/></svg></button>
            <button class="app open" aria-label="录屏"><svg class="ic-t" viewBox="0 0 36 36"><path d="M2 5h32v27H2z" fill="#f3f1ee"/><circle cx="14" cy="21" r="6" fill="#f06a24"/><path d="M24 14h4v14h-4z" fill="#f06a24"/><circle cx="21" cy="10" r="2" fill="#f06a24"/></svg></button>
        </div>
        <div class="tray">
            <i class="task-sep"></i>
            <span class="ime">拼</span>
            <svg class="ic" viewBox="0 0 24 24"><path d="M4 16l8-8 8 8" stroke="#eee" stroke-width="2"/></svg>
            <svg class="ic" viewBox="0 0 24 24"><path d="M5 20c-6 0-5-8 0-8 1-8 10-8 12-2 8 0 8 10 2 10z" fill="#e8e8e8" stroke="none"/></svg>
            <svg class="ic" viewBox="0 0 24 24"><circle cx="12" cy="12" r="11" fill="#2fa836" stroke="none"/><path d="M12 1a11 11 0 0 1 0 22 18 18 0 0 1-8-3c8 2 14-8 8-19z" fill="#f7d21e" stroke="none"/><path d="M12 6v12M6 12h12" stroke="#fff" stroke-width="4"/></svg>
            <svg class="ic" viewBox="0 0 24 24"><path d="M6 8h16v10H6zM2 3v5M6 3v5M1 8h6v4H4v5" stroke="#eee"/><path d="M9 10h11v6H9z" fill="#eee" stroke="none"/></svg>
            <svg class="ic" viewBox="0 0 24 24"><path d="M3 21C4 11 11 5 21 4M8 21c1-7 5-11 13-12M13 21c0-4 3-7 8-7" stroke="#bbb"/><circle cx="19" cy="20" r="1" stroke="#eee"/></svg>
            <svg class="ic" viewBox="0 0 24 24"><path d="M2 9h4l5-4v14l-5-4H2z" stroke="#eee"/><path d="M14 9c2 2 2 4 0 6M17 7c3 3 3 7 0 10M20 5c4 4 4 10 0 14" stroke="#999"/></svg>
            <div class="clock"><span>11:56</span><span>2020/4/21</span></div>
        </div>
    </footer>

    <svg class="cursor" viewBox="0 0 18 28"><path d="M1 1v21l5-5 4 9 4-2-4-8h7z"/></svg>
</body>

</html>
```
FILE: styles.css
```css
* {
    box-sizing: border-box;
}

body {
    margin: 0;
    height: 100vh;
    display: flex;
    flex-direction: column;
    overflow: hidden;
    font-family: "Open Sans", "Noto Sans CJK SC", sans-serif;
    font-size: 18px;
    line-height: 24px;
    color: #222;
    background: #dfe0e2;
}

button,
input,
select {
    font: inherit;
    color: inherit;
}

button {
    border: 0;
    padding: 0;
    background: none;
    white-space: nowrap;
}

h1,
h2,
ul {
    margin: 0;
    padding: 0;
    font-size: 18px;
    font-weight: normal;
    list-style: none;
}

svg {
    display: block;
    flex: none;
}

.ic,
.ic-s,
.ic-l {
    fill: none;
    stroke: #555;
    stroke-width: 1.5;
}

.ic {
    width: 24px;
    height: 24px;
}

.ic-s {
    width: 16px;
    height: 16px;
    stroke-width: 1;
}

.ic-l {
    width: 44px;
    height: 44px;
}

.ic-t {
    width: 36px;
    height: 36px;
    fill: none;
}

.dim {
    stroke: #aaa;
}

.mid {
    stroke: #8a8a8a;
}

.caret {
    flex: none;
    width: 8px;
    height: 5px;
    background: #333;
    clip-path: polygon(0 0, 100% 0, 50% 100%);
}

.caret-big {
    width: 12px;
    height: 6px;
}

.sep {
    flex: none;
    width: 1px;
    height: 30px;
    background: #c4c4c4;
}

/* title bar */
.titlebar {
    flex: none;
    display: flex;
    height: 34px;
    background: linear-gradient(#e4e4e4, #bdbdbd);
    border-bottom: 2px solid #707070;
}

.qat {
    flex: none;
    display: flex;
    align-items: center;
    gap: 11px;
    width: 620px;
}

.qat-save {
    margin-left: -4px;
}

.split {
    display: flex;
    height: 32px;
    margin: 0 -5px;
    border: 2px solid #2a70d0;
    background: #bfe0f8;
}

.split-main {
    width: 32px;
    padding-left: 4px;
}

.split-more {
    display: flex;
    align-items: center;
    justify-content: center;
    width: 17px;
    border-left: 1px solid #2a70d0;
    background: #dcefff;
}

.qat-toggle {
    display: flex;
    align-items: center;
    justify-content: center;
    width: 36px;
    height: 32px;
    margin: 0 -6px;
    border: 2px solid #1c64c8;
    background: #7ab4ec;
}

.qat-tail {
    display: flex;
    flex-direction: column;
    align-items: center;
    gap: 4px;
    width: 12px;
}

.qat-tail i {
    width: 12px;
    height: 2px;
    background: #333;
}

.doc-title {
    flex: none;
    width: 278px;
    height: 34px;
    padding-left: 24px;
    line-height: 33px;
    white-space: nowrap;
    background: #fff;
    color: #111;
}

.title-next {
    width: 21px;
    display: flex;
    align-items: center;
    justify-content: center;
}

.title-next svg {
    width: 7px;
    height: 13px;
    fill: #333;
}

.key-search {
    flex: none;
    width: 270px;
    height: 33px;
    padding: 0 5px;
    border: 2px solid #000;
    background: #fff;
    font-size: 17px;
}

.key-search::placeholder {
    color: #888;
    font-style: italic;
    font-weight: bold;
    opacity: 1;
}

.infobar {
    flex: none;
    display: flex;
    align-items: center;
    gap: 12px;
    width: 370px;
    padding: 0 8px 0 6px;
}

.login {
    display: flex;
    align-items: center;
    gap: 8px;
}

.caret-login {
    margin-left: auto;
}

.exchange {
    margin-right: 4px;
}

.win-controls {
    flex: 1;
    display: flex;
    align-items: center;
    gap: 52px;
    height: 34px;
    padding-left: 83px;
    background: #fff;
    overflow: hidden;
}

/* ribbon tabs */
.tabs {
    flex: none;
    display: flex;
    height: 30px;
    margin-left: -25px;
    padding-top: 4px;
    background: #9d9d9d;
}

.tab {
    padding: 0 15px;
    line-height: 26px;
}

.tab.active {
    background: linear-gradient(#f4f4f4, #dcdcdc);
}

.tab-fold {
    margin-left: 30px;
}

.tab-fold svg {
    width: 36px;
    height: 16px;
}

/* ribbon */
.ribbon {
    flex: none;
    display: flex;
    gap: 3px;
    height: 143px;
    background: #fff;
    overflow: hidden;
    border-bottom: 2px solid #d8d8d8;
}

.panel {
    flex: none;
    display: flex;
    flex-direction: column;
    border-right: 1px solid #bdbdbd;
}

.panel-build {
    width: 664px;
}

.panel-build .panel-title {
    padding-right: 15px;
}

.panel-stair {
    width: 141px;
}

.panel-model {
    width: 129px;
}

.panel-room {
    width: 298px;
}

.panel-hole {
    width: 218px;
}

.panel-datum {
    width: 89px;
}

.panel-plane {
    width: 188px;
}

.panel-body {
    flex: 1;
}

.panel-title {
    display: flex;
    align-items: center;
    justify-content: center;
    gap: 10px;
    height: 26px;
    background: #efefef;
    border-top: 2px solid #d4d4d4;
}

.build-grid {
    display: grid;
    grid-template-columns: 56px 56px 60px 64px 64px 64px 70px 60px 66px 54px 58px;
    margin-left: -12px;
}

.big {
    display: flex;
    flex-direction: column;
    align-items: center;
    gap: 2px;
    padding-top: 11px;
    line-height: 23px;
}

.big span {
    padding-top: 9px;
}

.rows {
    display: flex;
    flex-direction: column;
    padding: 6px 0 0 9px;
}

.small {
    display: flex;
    align-items: center;
    gap: 7px;
    height: 36px;
}

.small:disabled {
    color: #b4b4b4;
}

.small .far {
    margin-left: 5px;
}

.pair {
    display: grid;
    grid-template-columns: 146px 1fr;
}

.hole-grid {
    display: grid;
    grid-template-columns: 58px 56px 1fr;
}

.panel-body.datum {
    padding-top: 24px;
}

.plane-grid {
    display: grid;
    grid-template-columns: 56px 1fr;
    padding-left: 2px;
}

.plane-grid .rows {
    padding-left: 6px;
}

.options-bar {
    flex: none;
    height: 37px;
    background: #dfe0e2;
}

/* workspace */
.workspace {
    flex: 1;
    min-height: 0;
    display: flex;
    background: #f0f0f0;
    border-bottom: 1px solid #888;
}

.dock-head {
    flex: none;
    display: flex;
    align-items: center;
    height: 31px;
    background: #bfcddb;
    white-space: nowrap;
}

/* properties */
.props {
    flex: none;
    width: 240px;
    display: flex;
    flex-direction: column;
    padding-right: 5px;
    overflow: hidden;
}

.props-head {
    justify-content: flex-end;
    padding-right: 4px;
}

.type-picker {
    flex: none;
    display: flex;
    align-items: center;
    gap: 6px;
    height: 110px;
    margin-top: 2px;
    padding-right: 4px;
    border-top: 2px solid #777;
    border-bottom: 1px solid #ccc;
    background: linear-gradient(#fdfdfd, #efefef);
    color: #444;
}

.type-thumb {
    width: 11px;
    height: 98px;
    border: 1px solid #bbb;
    border-left: 0;
    background: #fafafa;
}

.type-picker .caret {
    margin-left: auto;
}

.instance {
    flex: none;
    display: flex;
    align-items: center;
    gap: 6px;
    height: 33px;
}

.combo {
    display: flex;
    align-items: center;
    height: 32px;
    padding-right: 5px;
    border: 1px solid #adadad;
    background: #dedede;
}

.combo select {
    flex: 1;
    min-width: 0;
    border: 0;
    padding: 0;
    background: none;
    appearance: none;
}

.instance .combo {
    flex: none;
    width: 217px;
    margin-left: -90px;
}

.edit-type {
    display: flex;
    align-items: center;
    gap: 5px;
    color: #111;
}

.prop-area {
    flex: 1;
    min-height: 0;
    display: flex;
}

.prop-scroll {
    flex: 1;
    overflow: hidden;
    background: #fff;
}

.prop-group {
    height: 28px;
    padding: 4px 6px;
    background: #dadada;
}

.prop-group svg {
    width: 8px;
    height: 10px;
    margin-left: auto;
    fill: none;
    stroke: #111;
}

.prop-table {
    table-layout: fixed;
    width: 298px;
    margin-left: -91px;
    border-collapse: collapse;
    color: #111;
}

.prop-table th,
.prop-table td {
    height: 29px;
    padding: 0 2px;
    border: 1px dotted #777;
    font-weight: normal;
    text-align: left;
    white-space: nowrap;
    line-height: 24px;
}

.prop-table th {
    width: 148px;
    padding-left: 8px;
}

.prop-table td button {
    display: block;
    width: 100%;
    height: 27px;
    border: 1px solid #999;
    border-right-width: 2px;
    border-bottom-width: 2px;
    background: #e0e0e0;
}

.prop-table td input[type="text"] {
    display: block;
    width: 100%;
    height: 27px;
    padding: 0 6px;
    border: 0;
    background: none;
}

.prop-table td.focus {
    padding: 0;
    border: 1px solid #000;
}

.prop-table td.check {
    padding-top: 3px;
    vertical-align: top;
}

.prop-table td input[type="checkbox"] {
    appearance: none;
    display: block;
    width: 13px;
    height: 13px;
    margin: 0;
    border: 1px solid #333;
}

.prop-table .off {
    color: #7a7a7a;
}

.vscroll {
    flex: none;
    width: 26px;
    display: flex;
    flex-direction: column;
    align-items: center;
    justify-content: space-between;
    padding: 6px 0 4px;
    background: #f0f0f0;
}

.props-thumb {
    width: 24px;
    height: 232px;
    margin: 4px 0 auto;
    background: #cdcdcd;
}

.props-foot {
    flex: none;
    display: flex;
    justify-content: flex-end;
    height: 36px;
    padding: 2px 3px 4px 0;
}

.props-foot button {
    width: 111px;
    background: #cbcbcb;
    color: #888;
}

/* drawing area */
.view {
    flex: 1;
    min-width: 0;
    display: flex;
    flex-direction: column;
    border-top: 2px solid #666;
    border-left: 2px solid #666;
}

.view-main {
    flex: 1;
    min-height: 0;
    display: flex;
}

.stage {
    position: relative;
    flex: 1;
    min-width: 0;
    background: #fff;
}

.model {
    width: 100%;
    height: 100%;
}

.w-thick {
    stroke-width: 9px;
}

.w-thick-in {
    stroke-width: 7px;
}

.w-mid {
    stroke-width: 7px;
}

.w-mid-in {
    stroke-width: 5px;
}

.w-thin {
    stroke-width: 5px;
}

.w-thin-in {
    stroke-width: 3px;
}

.mdi {
    position: absolute;
    top: 6px;
    right: 2px;
    display: flex;
    gap: 2px;
}

.viewcube {
    position: absolute;
    top: 75px;
    right: 22px;
    width: 138px;
    height: 116px;
}

.compass {
    font-size: 16px;
    fill: #aaa;
}

.faces {
    font-size: 18px;
    fill: #aaa;
}

.navbar {
    position: absolute;
    top: 198px;
    right: 1px;
    width: 36px;
    height: 118px;
    display: flex;
    flex-direction: column;
    align-items: center;
    justify-content: space-between;
    padding: 2px;
    border: 2px solid #ccc;
    border-radius: 5px;
    background: #f6f6f6;
}

.navbar hr {
    width: 100%;
    margin: 0;
    border: 0;
    border-top: 1px solid #ccc;
}

.navbar .caret {
    width: 5px;
    height: 3px;
    background: #777;
}

.nav-dot {
    align-self: flex-end;
    width: 9px;
    height: 9px;
    fill: none;
    stroke: #999;
}

.view-vscroll {
    width: 31px;
    padding: 6px 7px 6px 0;
}

.view-thumb {
    width: 24px;
    height: 26px;
    background: #cdcdcd;
}

.view-bar {
    flex: none;
    display: flex;
    align-items: center;
    height: 28px;
    padding-bottom: 3px;
    background: #f0f0f0;
}

.scale {
    font-family: "Liberation Mono", monospace;
    font-size: 15px;
    color: #111;
}

.view-tools {
    display: flex;
    gap: 15px;
    margin-left: 6px;
}

.tools-wide {
    gap: 16px;
    margin-left: 47px;
}

.hscroll {
    flex: 1;
    height: 100%;
    display: flex;
    justify-content: center;
}

.h-thumb {
    width: 26px;
    height: 25px;
    background: #cdcdcd;
}

.h-next {
    margin-right: 12px;
}

.grip {
    align-self: flex-end;
    margin-right: 8px;
}

/* project browser */
.browser {
    flex: none;
    width: 187px;
    display: flex;
    flex-direction: column;
    overflow: hidden;
}

.browser-head {
    padding-left: 4px;
}

.tree {
    flex: 1;
    margin-top: 2px;
    padding: 0 0 0 8px;
    border-top: 2px solid #666;
    border-left: 2px solid #666;
    background: #fff;
    color: #111;
}

.tree ul {
    margin-left: 20px;
}

.tree li {
    background: repeating-linear-gradient(#999 0 1px, transparent 1px 2px) 0 0 / 1px 100% no-repeat;
}

.tree li:last-child {
    background-size: 1px 13px;
}

.node {
    display: flex;
    align-items: center;
    height: 26px;
    white-space: nowrap;
}

.node span {
    padding: 0 3px;
}

.node svg + span {
    padding-left: 5px;
}

.box {
    flex: none;
    width: 9px;
    height: 9px;
    margin-left: -4px;
    border: 1px solid #888;
    background: linear-gradient(#446, #446) center / 5px 1px no-repeat, linear-gradient(#446, #446) center / 1px 5px no-repeat, #fff;
}

.box.minus {
    background: linear-gradient(#446, #446) center / 5px 1px no-repeat, #fff;
}

.nobox {
    width: 5px;
}

.dots {
    flex: none;
    width: 8px;
    height: 1px;
    background: repeating-linear-gradient(90deg, #999 0 1px, transparent 1px 2px);
}

.tree ul .dots {
    width: 10px;
}

.tree ul ul .dots {
    width: 15px;
}

.selected span {
    background: #e2e2e2;
}

/* status bar */
.status {
    flex: none;
    display: flex;
    justify-content: space-between;
    height: 22px;
    padding-left: 1191px;
    background: linear-gradient(#e2e2e2, #c6c6c6);
    overflow: hidden;
}

.worksets,
.pickers {
    display: flex;
    gap: 10px;
    padding-top: 3px;
}

.model-combo {
    width: 156px;
    height: 30px;
    margin-left: -2px;
    border: 0;
    padding-left: 3px;
    background: #fff;
    color: #888;
}

.model-combo select {
    opacity: 1;
}

.pickers {
    margin-right: -16px;
}

/* taskbar */
.taskbar {
    flex: none;
    display: flex;
    height: 60px;
    background: linear-gradient(90deg, #26262f, #2a262c);
    overflow: hidden;
}

.task-search {
    flex: none;
    display: flex;
    align-items: center;
    gap: 17px;
    width: 495px;
    border: 2px solid #c4c4c4;
    border-left: 0;
    background: #f2f2f2;
}

.task-search .ic {
    margin-left: -2px;
}

.task-search input {
    flex: 1;
    min-width: 0;
    padding: 0;
    border: 0;
    background: none;
    font-size: 24px;
}

.task-search input::placeholder {
    color: #333;
    opacity: 1;
}

.task-btn {
    flex: none;
    width: 72px;
    display: flex;
    align-items: center;
    justify-content: center;
}

.task-sep {
    flex: none;
    align-self: center;
    width: 5px;
    height: 36px;
    margin: 0 16px 0 10px;
    border: solid #55555c;
    border-width: 0 1px;
}

.apps {
    display: flex;
    gap: 2px;
}

.app {
    width: 73px;
    display: flex;
    align-items: center;
    justify-content: center;
    border-bottom: 3px solid transparent;
    padding-top: 3px;
}

.app.open {
    border-bottom-color: #76b0e4;
}

.app.current {
    background: #55555c;
}

.tray {
    flex: none;
    display: flex;
    align-items: center;
    gap: 12px;
    margin-left: auto;
    margin-right: -9px;
}

.tray .task-sep {
    margin: 0 6px 0 0;
}

.ime {
    align-self: flex-start;
    width: 22px;
    margin: 4px 8px 0 0;
    line-height: 22px;
    text-align: center;
    background: #fff;
    color: #000;
}

.clock {
    width: 94px;
    display: flex;
    flex-direction: column;
    align-items: center;
    gap: 3px;
    margin-left: 7px;
    color: #fff;
}

/* mouse pointer */
.cursor {
    position: absolute;
    left: 372px;
    top: 17px;
    width: 18px;
    height: 28px;
    fill: #fff;
    stroke: #222;
}
```
